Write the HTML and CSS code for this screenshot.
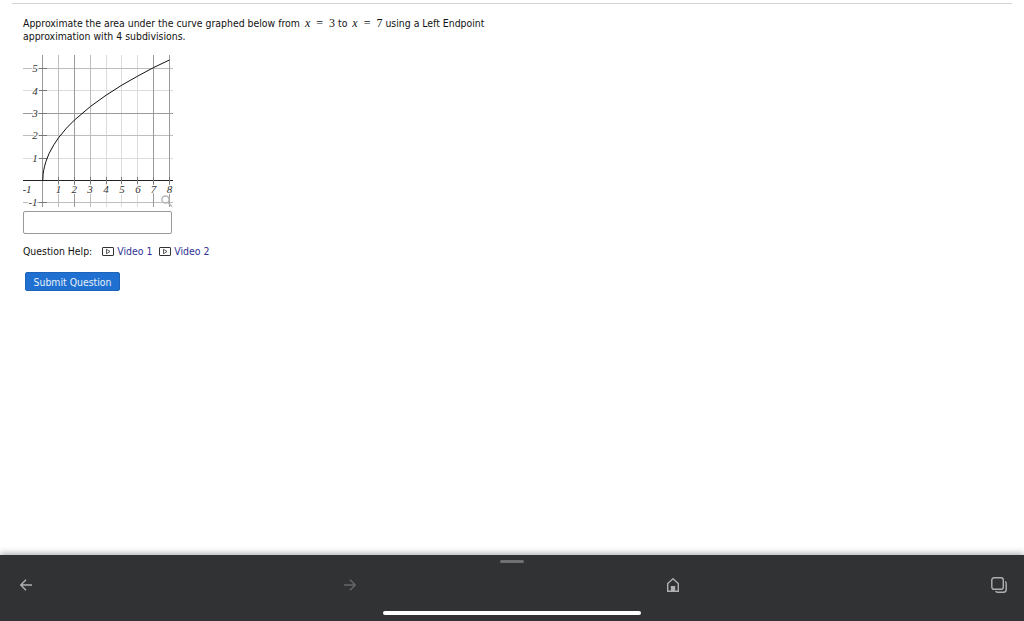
FILE: index.html
```html
<!DOCTYPE html>
<html lang="en">
<head>
  <meta charset="UTF-8" />
  <title>Question</title>
  <link rel="stylesheet" href="styles.css">
</head>
<body>
  <div class="page">
    <div class="question">
      <p class="prompt">Approximate the area under the curve graphed below from <span class="math"><i>x</i> = 3</span> to <span class="math"><i>x</i> = 7</span> using a Left Endpoint approximation with 4 subdivisions.</p>

      <!-- graph -->
      <svg class="graph" width="150" height="152" viewBox="23 55 150 152">
        <g class="grid-light">
          <path d="M23 90.5H173M23 158.5H173M106.5 55V207M121.5 55V207M137.5 55V207" />
        </g>
        <g class="grid-mid">
          <path d="M23 68.5H173M23 135.5H173M23 202.5H173M58.5 55V207M90.5 55V207" />
        </g>
        <g class="grid-dark">
          <path d="M23 113.5H173M74.5 55V207M153.5 55V207M169.5 55V207M42.5 55V207" />
        </g>
        <path class="axis" d="M23 180.500H173" />
        <path class="ticks" d="M39 68.5H47M39 90.5H47M39 113.5H47M39 135.5H47M39 158.5H47M39 202.5H47M58.5 177V184M74.5 177V184M90.5 177V184M106.5 177V184M121.5 177V184M137.5 177V184M153.5 177V184M169.5 177V184" />
        <polyline class="curve" points="42.8,180.3 43.1,174.3 43.6,170.8 44.4,166.9 46,161.3 49.1,153.4 53.9,144.7 58.6,137.7 66.5,128.1 74.4,120.1 90.3,106.6 106.1,95.2 121.9,85.1 137.7,76.1 153.5,67.6 169.4,60" />
        <g class="labels">
          <text x="35" y="72">5</text>
          <text x="35" y="94.500">4</text>
          <text x="35" y="117">3</text>
          <text x="35" y="139">2</text>
          <text x="35" y="162">1</text>
          <text x="27" y="192.500">-1</text>
          <text x="58.5" y="192.500">1</text>
          <text x="74.3" y="192.500">2</text>
          <text x="90" y="192.500">3</text>
          <text x="106" y="192.500">4</text>
          <text x="122" y="192.500">5</text>
          <text x="138" y="192.500">6</text>
          <text x="153.5" y="192.500">7</text>
          <text x="169.5" y="192.500">8</text>
          <text x="33" y="206">-1</text>
        </g>
        <circle class="zoom-icon" cx="165.5" cy="199.5" r="3.6" />
        <path class="zoom-icon" d="M168 202.5L172 206.5" />
      </svg>

      <input class="answer" type="text" />

      <div class="help">
        <span class="help-label">Question Help:</span>
        <a class="video-link" href="#">
          <svg class="video-icon" width="12" height="9" viewBox="0 0 12 9"><rect x="0.5" y="0.5" width="11" height="8" rx="0.5" /><path d="M4.5 2.3L8 4.5L4.5 6.7Z" /></svg>
          Video 1
        </a>
        <a class="video-link" href="#">
          <svg class="video-icon" width="12" height="9" viewBox="0 0 12 9"><rect x="0.5" y="0.5" width="11" height="8" rx="0.5" /><path d="M4.5 2.3L8 4.5L4.5 6.7Z" /></svg>
          Video 2
        </a>
      </div>

      <button class="submit">Submit Question</button>
    </div>
  </div>

  <!-- bottom toolbar -->
  <div class="toolbar">
    <span class="grabber"></span>
    <div class="tools">
      <svg class="tool" width="12" height="12" viewBox="0 0 12 12"><path d="M12 6H1M6 0.8L0.8 6L6 11.2" /></svg>
      <svg class="tool tool-off" width="12" height="12" viewBox="0 0 12 12"><path d="M0 6H11M6 0.8L11.200 6L6 11.2" /></svg>
      <svg class="tool" width="12" height="14" viewBox="0 0 12 14"><path d="M0.7 13.300V5.500L6 0.8L11.300 5.500V13.300Z" /><rect class="door" x="3.800" y="8" width="4.400" height="6" /></svg>
      <svg class="tool tool-tabs" width="16" height="16" viewBox="0 0 16 16"><rect x="0.800" y="0.800" width="11.500" height="11.500" rx="2.200" /><path d="M14.200 4.500C15 5 15.200 5.800 15.200 6.500V12.500C15.200 14 14 15.200 12.500 15.200H6.500C5.800 15.200 5 15 4.500 14.200" /></svg>
    </div>
    <span class="home-bar"></span>
  </div>
</body>
</html>
```

FILE: styles.css
```css
html, body {
  height: 100%;
}

body {
  margin: 0;
  display: flex;
  flex-direction: column;
  overflow: hidden;
  background: #fff;
  color: #111;
  font-family: "DejaVu Sans", sans-serif;
  font-stretch: condensed;
  font-size: 10.4px;
}

.page {
  flex: 1;
  margin: 3px 12px 0;
  border-top: 1px solid #d4d4d4;
}

.question {
  padding: 13px 11px 0;
}

.prompt {
  margin: 0;
  width: 470px;
  line-height: 13px;
}

.math {
  margin-left: 2px;
  font-family: "Liberation Serif", serif;
  font-size: 12px;
  word-spacing: 3px;
}

.graph {
  display: block;
  margin-top: 12px;
}

.graph path,
.graph polyline {
  fill: none;
}

.grid-light path {
  stroke: #dcdcdc;
  stroke-width: 1;
}

.grid-mid path {
  stroke: #bdbdbd;
  stroke-width: 1;
}

.grid-dark path {
  stroke: #9a9a9a;
  stroke-width: 1;
}

.graph .axis {
  stroke: #222;
  stroke-width: 1;
}

.graph .ticks {
  stroke: #777;
  stroke-width: 1;
}

.curve {
  stroke: #111;
  stroke-width: 1;
}

.labels text {
  font-family: "Liberation Serif", serif;
  font-style: italic;
  font-size: 11px;
  fill: #333;
  stroke: #fff;
  stroke-width: 2px;
  paint-order: stroke;
  text-anchor: middle;
}

.graph .zoom-icon {
  fill: none;
  stroke: #b5b5b5;
  stroke-width: 1.5;
}

.answer {
  display: block;
  box-sizing: border-box;
  width: 149px;
  height: 23px;
  margin: 4px 0 0;
  padding: 0;
  border: 1px solid #999;
  border-radius: 2px;
  background: #fff;
}

.help {
  display: flex;
  align-items: center;
  margin-top: 11px;
  line-height: 13px;
}

.help-label {
  margin-right: 10px;
}

.video-link {
  display: flex;
  align-items: center;
  gap: 3px;
  margin-right: 7px;
  color: #2e3192;
  text-decoration: none;
}

.video-icon rect {
  fill: none;
  stroke: #333;
}

.video-icon path {
  fill: none;
  stroke: #333;
  stroke-width: 0.8;
}

.submit {
  display: block;
  width: 95px;
  height: 19px;
  margin: 14px 0 0 2px;
  padding: 0;
  border: 1px solid #1c64b8;
  border-radius: 2px;
  background: #1f70d0;
  color: #e8f0fa;
  font-family: inherit;
  font-stretch: inherit;
  font-size: 10.4px;
}

.toolbar {
  position: relative;
  height: 66px;
  background: #313234;
  box-shadow: 0 -2px 6px rgba(0, 0, 0, 0.3);
}

.tools {
  display: flex;
  justify-content: space-between;
  align-items: center;
  height: 60px;
  padding: 0 17px 0 20px;
}

.tool {
  fill: none;
  stroke: #b0b0b0;
  stroke-width: 1.4;
}

.tool-off {
  stroke: #66676a;
}

.door {
  fill: #b0b0b0;
  stroke: none;
}

.grabber {
  position: absolute;
  top: 5px;
  left: 500px;
  width: 24px;
  height: 3px;
  border-radius: 2px;
  background: #6f7073;
}

.home-bar {
  position: absolute;
  bottom: 6px;
  left: 383px;
  width: 258px;
  height: 4px;
  border-radius: 2px;
  background: #fff;
}
```
